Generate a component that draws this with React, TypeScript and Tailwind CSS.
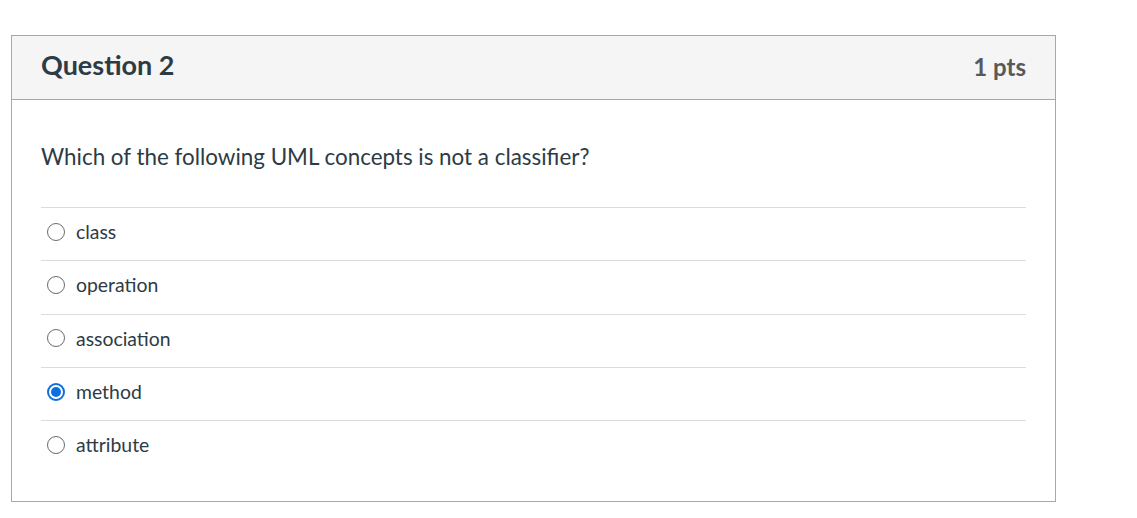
const answers = ["class", "operation", "association", "method", "attribute"];

function Radio({ checked }: { checked: boolean }) {
  if (checked) {
    return (
      <span className="flex h-[18px] w-[18px] items-center justify-center rounded-full border-2 border-[#0b6fe0] bg-white">
        <span className="h-[10px] w-[10px] rounded-full bg-[#0b6fe0]" />
      </span>
    );
  }
  return <span className="block h-[18px] w-[18px] rounded-full border border-[#6b6b6b] bg-white" />;
}

export default function App() {
  return (
    <div className="min-h-screen bg-white pl-[11px] pt-[35px] font-['Lato','Liberation_Sans',sans-serif]">
      <div className="w-[1045px] border border-[#a8a8a8] bg-white">
        {/* Header */}
        <div className="flex h-[64px] items-center justify-between border-b border-[#a8a8a8] bg-[#f5f5f5] pb-[5px] pl-[29px] pr-[29px]">
          <h2 className="text-[27px] font-bold text-[#2d3b45]">Question 2</h2>
          <span className="mt-[4px] text-[24px] font-bold text-[#58595b]">1 pts</span>
        </div>

        {/* Body */}
        <div className="px-[29px] pb-[28px] pt-[43px]">
          <p className="mb-[36px] text-[22.4px] leading-[28px] text-[#2d3b45]">
            Which of the following UML concepts is not a classifier?
          </p>
          <div>
            {answers.map((a) => (
              <label key={a} className="flex h-[53.3px] items-center gap-[11px] border-t border-[#dcdcdc] pb-[5px] pl-[6px]">
                <Radio checked={a === "method"} />
                <span className="text-[19.4px] text-[#2d3b45]">{a}</span>
              </label>
            ))}
          </div>
        </div>
      </div>
    </div>
  );
}
